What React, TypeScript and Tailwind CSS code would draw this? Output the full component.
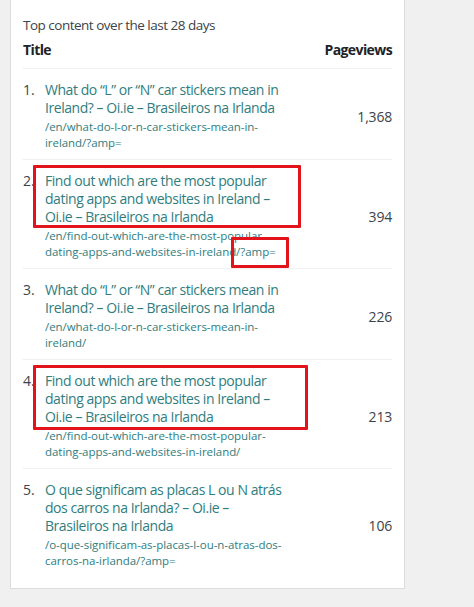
import React from "react";

type Row = {
  n: number;
  title: string[];
  url: string[];
  views: string;
  marks?: { left: number; top: number; width: number; height: number }[];
};

const rows: Row[] = [
  {
    n: 1,
    title: ["What do “L” or “N” car stickers mean in", "Ireland? – Oi.ie – Brasileiros na Irlanda"],
    url: ["/en/what-do-l-or-n-car-stickers-mean-in-", "ireland/?amp="],
    views: "1,368",
  },
  {
    n: 2,
    title: ["Find out which are the most popular", "dating apps and websites in Ireland –", "Oi.ie – Brasileiros na Irlanda"],
    url: ["/en/find-out-which-are-the-most-popular-", "dating-apps-and-websites-in-ireland/?amp="],
    views: "394",
    marks: [
      { left: 10, top: 5, width: 268, height: 63 },
      { left: 208, top: 77, width: 58, height: 31 },
    ],
  },
  {
    n: 3,
    title: ["What do “L” or “N” car stickers mean in", "Ireland? – Oi.ie – Brasileiros na Irlanda"],
    url: ["/en/what-do-l-or-n-car-stickers-mean-in-", "ireland/"],
    views: "226",
  },
  {
    n: 4,
    title: ["Find out which are the most popular", "dating apps and websites in Ireland –", "Oi.ie – Brasileiros na Irlanda"],
    url: ["/en/find-out-which-are-the-most-popular-", "dating-apps-and-websites-in-ireland/"],
    views: "213",
    marks: [{ left: 10, top: 5, width: 275, height: 65 }],
  },
  {
    n: 5,
    title: ["O que significam as placas L ou N atrás", "dos carros na Irlanda? – Oi.ie –", "Brasileiros na Irlanda"],
    url: ["/o-que-significam-as-placas-l-ou-n-atras-dos-", "carros-na-irlanda/?amp="],
    views: "106",
  },
];

// keep the reference's line breaks in one text block
const Lines = ({ lines }: { lines: string[] }) => (
  <>
    {lines.map((t, i) => (
      <React.Fragment key={i}>
        {i > 0 && <br />}
        {t}
      </React.Fragment>
    ))}
  </>
);

const App = () => {
  return (
    <div
      className="w-[474px] h-[607px] bg-[#f0f0f1] overflow-hidden"
      style={{ fontFamily: '"Open Sans", "Noto Sans", sans-serif' }}
    >
      <div className="ml-[10px] w-[395px] bg-white border-x border-b border-[#dcdcde] px-3 pt-[15px] pb-[11px]">
        <p className="text-[13.5px] leading-[20px] tracking-[-0.5px] text-[#3c434a]">Top content over the last 28 days</p>
        <div className="flex justify-between items-center mt-[5px] pb-[8px] text-[14px] leading-[20px] font-bold tracking-[-0.6px] text-[#1d2327]">
          <span>Title</span>
          <span>Pageviews</span>
        </div>

        {rows.map((r) => (
          <div key={r.n} className="relative flex items-center border-t border-[#f0f0f1] pt-3 pb-[8px]">
            <span className="w-[22px] self-start text-[14px] leading-[18px] text-[#3c434a]">{r.n}.</span>
            <div className="flex-1 text-[#2f7d7e]">
              <p className="text-[14px] leading-[18px] tracking-[-0.45px]">
                <Lines lines={r.title} />
              </p>
              <p className="mt-[2px] text-[11.5px] leading-[16px] tracking-[-0.05px]">
                <Lines lines={r.url} />
              </p>
            </div>
            <span className="text-[14px] tracking-[-0.2px] text-[#3c434a]">{r.views}</span>

            {r.marks?.map((m, i) => (
              <div
                key={i}
                className="absolute border-[3px] border-[#e3131c] rounded-[1px]"
                style={{ left: m.left, top: m.top, width: m.width, height: m.height }}
              />
            ))}
          </div>
        ))}
      </div>
    </div>
  );
};

export default App;
